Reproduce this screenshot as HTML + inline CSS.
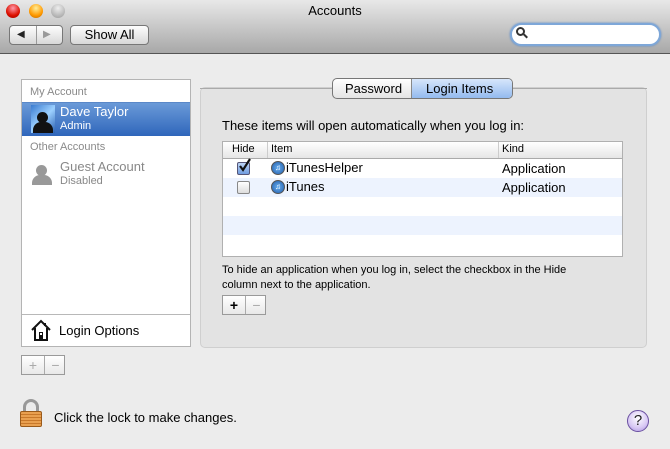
<!DOCTYPE html>
<html><head><meta charset="utf-8"><style>
*{margin:0;padding:0;box-sizing:border-box}
body{width:670px;height:449px;overflow:hidden;background:#ececec;font-family:"Lucida Grande","Liberation Sans",sans-serif;font-size:12px;color:#000;position:relative}
.a{position:absolute}
.tb{left:0;top:0;width:670px;height:54px;background:linear-gradient(#e8e8e8,#a8a8a8);border-bottom:1px solid #555}
.light{width:14px;height:14px;border-radius:50%;top:4px}
.btn{border:1px solid #777;border-radius:4px;background:linear-gradient(#fdfdfd,#d8d8d8);}
.list{left:21px;top:79px;width:170px;height:268px;background:#fff;border:1px solid #b4b4b4}
.hdr{color:#8a8a8a;font-size:11px}
.panel{left:200px;top:87px;width:447px;height:261px;background:#e3e3e3;border:1px solid #cfcfcf;border-radius:5px}
.table{left:222px;top:141px;width:401px;height:116px;border:1px solid #b0b0b0;background:#fff}
.row{position:absolute;left:0;width:399px;height:19px}
.pm{border:1px solid #9a9a9a;background:linear-gradient(#fff,#e8e8e8);width:44px;height:20px}
.pm span{position:absolute;top:0;width:22px;text-align:center;font-size:14px;line-height:18px}
</style></head><body>
<div class="a tb"></div>
<div class="a light" style="left:6px;background:radial-gradient(circle at 50% 30%,#f9a,#d10 60%,#900)"></div>
<div class="a light" style="left:29px;background:radial-gradient(circle at 50% 30%,#fe9,#f90 60%,#b60)"></div>
<div class="a light" style="left:51px;background:radial-gradient(circle at 50% 30%,#eee,#bbb 60%,#999)"></div>
<div class="a" style="left:0;top:3px;width:670px;text-align:center;font-size:13px">Accounts</div>
<div class="a btn" style="left:9px;top:25px;width:54px;height:20px"></div>
<div class="a" style="left:36px;top:26px;width:1px;height:18px;background:#999"></div>
<div class="a" style="left:17px;top:29px;font-size:10px;color:#222">◀</div>
<div class="a" style="left:43px;top:29px;font-size:10px;color:#999">▶</div>
<div class="a btn" style="left:70px;top:25px;width:79px;height:20px;text-align:center;line-height:18px;font-size:13px">Show All</div>
<div class="a" style="left:510px;top:23px;width:151px;height:23px;border-radius:12px;background:#fff;border:2px solid #7ea7d8;box-shadow:0 0 2px #5a8ac8"></div>
<div class="a" style="left:516px;top:27px;width:9px;height:9px;border:2px solid #333;border-radius:50%"></div>
<div class="a" style="left:523px;top:35px;width:5px;height:2px;background:#333;transform:rotate(45deg)"></div>

<div class="a list"></div>
<div class="a hdr" style="left:30px;top:86px">My Account</div>
<div class="a" style="left:22px;top:102px;width:168px;height:34px;background:linear-gradient(#6a9ad8,#2f66bb);border-top:1px solid #5a88c8"></div>
<div class="a" style="left:31px;top:105px;width:24px;height:28px;background:linear-gradient(135deg,#3a7bd0,#9cd0ff,#2a60b0)"></div>
<div class="a" style="left:37px;top:112px;width:11px;height:11px;border-radius:50%;background:#111"></div>
<div class="a" style="left:33px;top:122px;width:20px;height:11px;border-radius:8px 8px 0 0;background:#111"></div>
<div class="a" style="left:60px;top:104px;color:#fff;font-size:13px">Dave Taylor</div>
<div class="a" style="left:60px;top:120px;color:#fff;font-size:11px">Admin</div>
<div class="a hdr" style="left:30px;top:141px">Other Accounts</div>
<div class="a" style="left:36px;top:165px;width:11px;height:11px;border-radius:50%;background:#999"></div>
<div class="a" style="left:32px;top:175px;width:20px;height:10px;border-radius:8px 8px 0 0;background:#999"></div>
<div class="a" style="left:60px;top:159px;color:#888;font-size:13px">Guest Account</div>
<div class="a" style="left:60px;top:175px;color:#888;font-size:11px">Disabled</div>
<div class="a" style="left:22px;top:314px;width:168px;height:1px;background:#b8b8b8"></div>
<svg class="a" style="left:29px;top:318px" width="24" height="24" viewBox="0 0 24 24"><path d="M3 12 L12 3 L21 12 M6 10 V22 H18 V10 M16 5 V8" fill="none" stroke="#111" stroke-width="2"/><rect x="10" y="14" width="4" height="8" fill="#111"/><rect x="11" y="15" width="2" height="2" fill="#fff"/></svg>
<div class="a" style="left:59px;top:323px;font-size:13px">Login Options</div>
<div class="a pm" style="left:21px;top:355px;color:#aaa"><span style="left:0">+</span><span style="left:22px;border-left:1px solid #aaa">−</span></div>

<div class="a panel"></div>
<div class="a" style="left:200px;top:88px;width:447px;height:1px;background:#aaa"></div>
<div class="a" style="left:332px;top:78px;width:181px;height:21px;border:1px solid #777;border-radius:5px;background:linear-gradient(#fff,#e4e4e4);overflow:hidden">
<div class="a" style="left:78px;top:0;width:103px;height:20px;background:linear-gradient(#d7e6fb,#90b8ee);border-left:1px solid #888"></div>
<div class="a" style="left:12px;top:2px;font-size:13px">Password</div>
<div class="a" style="left:93px;top:2px;font-size:13px">Login Items</div>
</div>
<div class="a" style="left:222px;top:118px;font-size:13px">These items will open automatically when you log in:</div>
<div class="a table">
<div class="row" style="top:0;height:17px;background:linear-gradient(#fff,#e6e6e6);border-bottom:1px solid #aaa;font-size:11px"><span class="a" style="left:9px;top:1px">Hide</span><span class="a" style="left:44px;top:0;width:1px;height:16px;background:#ccc"></span><span class="a" style="left:48px;top:1px">Item</span><span class="a" style="left:275px;top:0;width:1px;height:16px;background:#ccc"></span><span class="a" style="left:279px;top:1px">Kind</span></div>
<div class="row" style="top:17px"></div>
<div class="row" style="top:36px;background:#edf3fe"></div>
<div class="row" style="top:74px;background:#edf3fe"></div>
<div class="a" style="left:14px;top:20px;width:13px;height:13px;border:1px solid #557;border-radius:2px;background:linear-gradient(#bcd4f4,#6f9de0)"></div>
<svg class="a" style="left:14px;top:15px" width="16" height="16" viewBox="0 0 16 16"><path d="M3 9 L6 13 L13 2" fill="none" stroke="#111" stroke-width="2.2"/></svg>
<div class="a" style="left:14px;top:39px;width:13px;height:13px;border:1px solid #888;border-radius:2px;background:linear-gradient(#fff,#ddd)"></div>
<div class="a" style="left:48px;top:19px;width:14px;height:14px;border-radius:50%;background:radial-gradient(#6ab0f0,#1f5aa8);border:1px solid #555;color:#fff;font-size:8px;text-align:center;line-height:12px">♫</div>
<div class="a" style="left:48px;top:38px;width:14px;height:14px;border-radius:50%;background:radial-gradient(#6ab0f0,#1f5aa8);border:1px solid #555;color:#fff;font-size:8px;text-align:center;line-height:12px">♫</div>
<div class="a" style="left:63px;top:18px;font-size:13px">iTunesHelper</div>
<div class="a" style="left:63px;top:37px;font-size:13px">iTunes</div>
<div class="a" style="left:279px;top:19px;font-size:13px">Application</div>
<div class="a" style="left:279px;top:38px;font-size:13px">Application</div>
</div>
<div class="a" style="left:222px;top:263px;font-size:11px;line-height:15px;width:400px">To hide an application when you log in, select the checkbox in the Hide<br>column next to the application.</div>
<div class="a pm" style="left:222px;top:295px"><span style="left:0;font-weight:bold">+</span><span style="left:22px;border-left:1px solid #aaa;color:#aaa">−</span></div>

<div class="a" style="left:23px;top:399px;width:16px;height:16px;border:3px solid #999;border-bottom:none;border-radius:8px 8px 0 0"></div>
<div class="a" style="left:20px;top:411px;width:22px;height:16px;border-radius:2px;background:repeating-linear-gradient(#e9a050 0 2px,#c8782a 2px 3px);border:1px solid #9a5a1a"></div>
<div class="a" style="left:54px;top:410px;font-size:13px">Click the lock to make changes.</div>
<div class="a" style="left:627px;top:410px;width:22px;height:22px;border-radius:50%;background:radial-gradient(circle at 50% 35%,#fff,#d8c8f4 60%,#a890dc);border:1px solid #6a50a0;text-align:center;font-size:15px;line-height:20px;color:#222">?</div>
</body></html>
